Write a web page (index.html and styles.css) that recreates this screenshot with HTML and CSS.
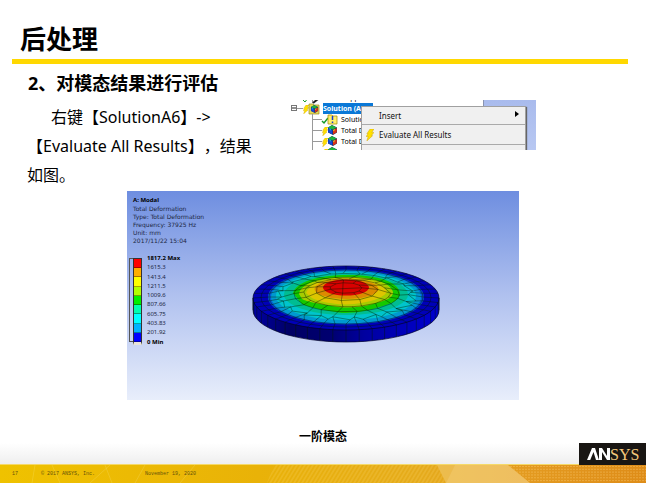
FILE: index.html
```html
<!DOCTYPE html>
<html lang="zh-CN">
<head>
<meta charset="utf-8">
<title>后处理</title>
<link rel="stylesheet" href="styles.css">
</head>
<body>
<svg class="defs" aria-hidden="true">
  <symbol id="bolt" viewBox="0 0 6 9"><path d="M3 0H6L4.4 2.6H6L4 5H5L.6 9 1.6 5.6H0L1.6 3.6H.6Z" fill="#ffe000" stroke="#c79b00" stroke-width=".3"/></symbol>
  <symbol id="cube" viewBox="0 0 11 10"><path d="M5 0 10 2.5V7.5L6 10 1 7.5V2.5Z" fill="#17306b"/><path d="M1 2.5 5 .3 9.7 2.5 5.5 4.5Z" fill="#1eb53a"/><path d="M1.2 3 5.3 5V9.3L1.2 7.3Z" fill="#1548d8"/><path d="M6 5 9.8 3V7.3L6 9.4Z" fill="#d93217"/><path d="M2 2.5 4 4 3.4 6Z" fill="#16c7c2"/><path d="M6 5 8 4 7 6.4Z" fill="#eadb27"/></symbol>
  <symbol id="branch" viewBox="0 0 29 11"><path d="M.5 0V11M1 5.500H10" stroke="#999" fill="none"/><use href="#bolt" x="10" y="2" width="6" height="9"/><use href="#cube" x="15" y="0" width="11" height="10"/></symbol>
</svg>
<main class="slide">
  <h1>后处理</h1>
  <section class="content">
    <h2>2、对模态结果进行评估</h2>
    <div class="intro">
      <p>右键【SolutionA6】-&gt;【Evaluate All Results】，结果如图。</p>
      <div class="outline">
        <ul class="tree">
          <li class="child"><svg width="29" height="11"><path d="M.5 0V11M1 5.500H10" stroke="#999"/><path d="M-9 8-7 10 -4 6" stroke="#159a28" fill="none"/><path d="M1 11 6 7" stroke="#222" stroke-width="2"/></svg><span class="near">Fixed Support</span></li>
          <li><svg width="33" height="11"><path d="M7 5.500H13" stroke="#999"/><rect x="1.500" y="2.500" width="5" height="5" fill="#fff" stroke="#777"/><path d="M2 5H6" stroke="#222"/><use href="#bolt" x="13" y="2" width="6" height="9"/><path d="M19 1H23L24 2H29V11H19Z" fill="#e8dc58" stroke="#998a1a" stroke-width=".7"/><use href="#cube" x="20" y="2" width="9" height="8"/></svg><b>Solution (A6)</b></li>
          <li class="child"><svg width="29" height="11"><path d="M.5 0V11M1 5.500H10" stroke="#999"/><path d="M10 7 12 9 16 4" stroke="#159a28" stroke-width="1.500" fill="none"/><path d="M16 1H20L21 2H25V10H16Z" fill="#fff06a" stroke="#a79318" stroke-width=".8"/><path d="M20.500 2V6M20.500 7.500V9" stroke="#1639d0" stroke-width="1.500"/></svg><span>Solutio</span></li>
          <li class="child"><svg width="29" height="11"><use href="#branch"/></svg><span>Total D</span></li>
          <li class="child"><svg width="29" height="11"><use href="#branch"/></svg><span>Total D</span></li>
          <li class="child"><svg width="29" height="11"><use href="#branch"/></svg><span>Total D</span></li>
        </ul>
        <div class="viewport"></div>
        <div class="menu">
          <button type="button">Insert<svg class="arrow" width="4" height="6"><path d="M0 0 4 3 0 6Z"/></svg></button>
          <button type="button"><svg class="flash" width="8" height="12"><use href="#bolt" width="8" height="12"/></svg>Evaluate All Results</button>
        </div>
      </div>
    </div>
  </section>
  <figure>
    <div class="result">
      <div class="info"><b>A: Modal</b><span>Total Deformation</span><span>Type: Total Deformation</span><span>Frequency: 37925 Hz</span><span>Unit: mm</span><span>2017/11/22 15:04</span></div>
      <div class="legend">
        <div class="bracket"></div>
        <div class="scale"><i class="c1"></i><i class="c2"></i><i class="c3"></i><i class="c4"></i><i class="c5"></i><i class="c6"></i><i class="c7"></i><i class="c8"></i><i class="c9"></i></div>
        <div class="values"><b>1817.2 Max</b><span>1615.3</span><span>1413.4</span><span>1211.5</span><span>1009.6</span><span>807.66</span><span>605.75</span><span>403.83</span><span>201.92</span><b>0 Min</b></div>
      </div>
      <svg class="disc" viewBox="0 0 190 80" role="img" aria-label="Total deformation, mode 1">
        <defs><linearGradient id="side"><stop offset="0" stop-color="#0000a4"/><stop offset=".2" stop-color="#000064"/><stop offset=".42" stop-color="#000070"/><stop offset=".6" stop-color="#0000a0"/><stop offset="1" stop-color="#0000d0"/></linearGradient></defs>
        <path d="M2 34V46A93 32 0 0 0 188 46V34Z" fill="url(#side)" stroke="#000028" stroke-width=".7"/>
        <ellipse cx="95" cy="34" rx="93" ry="32" fill="#0000b8" stroke="#000028" stroke-width=".7"/>
        <ellipse cx="95" cy="33" rx="78" ry="27.500" fill="#0058d8"/>
        <ellipse cx="95" cy="33" rx="75" ry="26.500" fill="#0098cf"/>
        <ellipse cx="95" cy="32" rx="70" ry="24" fill="#00c4cc"/>
        <ellipse cx="95" cy="30.500" rx="62" ry="20.500" fill="#00bd92"/>
        <path d="M42 29C45 18 67 11 97 11 128 11 146 18 149 28 150 36 140 40 128 43 114 48 101 49 91 49 74 46 60 44 51 40Z" fill="#14c800"/>
        <path d="M48 30C50 19 70 13 97 13 124 13 139 19 142 28 143 34 133 37 122 40 108 44 97 44 87 43 70 40 55 38 51 35Z" fill="#a6cb00"/>
        <path d="M55 29C59 19 73 14 95 14 119 14 132 19 136 28 131 35 118 38 103 40 86 42 66 37 61 34Z" fill="#ddc500"/>
        <ellipse cx="95.500" cy="25" rx="32" ry="10" fill="#dc8a00"/>
        <ellipse cx="95" cy="23.500" rx="23" ry="8" fill="#d90000"/>
        <path id="mesh" fill="none" stroke="#001800" stroke-opacity=".7" stroke-width=".6"/>
      </svg>
    </div>
    <figcaption>一阶模态</figcaption>
  </figure>
</main>
<footer>
  <div class="brand">
    <svg width="67" height="22" viewBox="0 0 67 22" role="img" aria-label="ANSYS"><path d="M8 17 13 5H16L20 17H17L14.500 9 11.200 17ZM20 17V5H23L28 13V5H31V17H28L23 9V17Z" fill="#fff"/><text x="31" y="17" class="sys">SYS</text></svg>
  </div>
  <div class="strip"><span>17</span><span>© 2017 ANSYS, Inc.</span><span>November 19, 2020</span>
    <svg class="rays" viewBox="0 0 646 19" preserveAspectRatio="none" aria-hidden="true">
      <defs>
        <pattern id="arcs" width="4" height="19" patternUnits="userSpaceOnUse" patternTransform="skewX(-30)"><path d="M1 0V19" stroke="#ffe07a" stroke-opacity=".35"/></pattern>
        <pattern id="dots" width="3" height="3" patternUnits="userSpaceOnUse"><path d="M0 1.500H2" stroke="#ffd27a" stroke-opacity=".4"/></pattern>
      </defs>
      <path d="M90 19 110 0M105 0 112 19M135 19 145 0M180 19 195 0M35 0 32 19M52 0 60 19" stroke="#fff0a0" stroke-opacity=".2" fill="none"/>
      <path d="M274 0H437L446 19H267Z" fill="url(#arcs)"/>
      <path d="M437 0H508L530 19H446Z" fill="#f8dc96" fill-opacity=".4"/>
      <path d="M455 0H508L530 19H446Z" fill="#f8dc96" fill-opacity=".25"/>
      <path d="M508 0H646V19H530Z" fill="url(#dots)"/>
    </svg>
  </div>
</footer>
<script src="mesh.js"></script>
</body>
</html>
```
FILE: styles.css
```css
* { box-sizing: border-box; }
body {
  margin: 0;
  min-height: 100vh;
  display: flex;
  flex-direction: column;
  background: #fff;
  color: #000;
  font-family: "Noto Sans", "Noto Sans CJK SC", sans-serif;
  text-spacing-trim: space-all;
}
.defs { position: absolute; width: 0; height: 0; }
svg { display: block; flex: none; }
.slide { flex: 1; }
h1 {
  margin: 0 18px 0 12px;
  padding: 18px 0 2px 8px;
  border-bottom: 5px solid #ffd800;
  font: bold 26px/39px "Noto Sans CJK SC", sans-serif;
}
.content { padding: 0 110px 0 27px; }
h2 {
  margin: 0;
  padding: 3px 0 1px 1px;
  font: bold 18px/32px "Noto Sans", "Noto Sans CJK SC", sans-serif;
}
.intro { display: flex; justify-content: space-between; }
.intro p {
  margin: 0;
  padding: 3px 0 1px;
  width: 240px;
  font-size: 16px;
  line-height: 29px;
  text-indent: 24px;
}
.outline {
  position: relative;
  display: flex;
  width: 246px;
  height: 50px;
  overflow: hidden;
  background: #fff;
}
.tree {
  flex: 1;
  margin: -8px 0 0;
  padding: 0;
  list-style: none;
  font-size: 7px;
  line-height: 11px;
  white-space: nowrap;
}
.tree li { display: flex; height: 11px; }
.tree .child { padding-left: 22px; }
.tree svg { overflow: visible; }
.tree b { background: #0a78d7; color: #fff; padding-right: 6px; }
.tree .near { margin-left: -18px; }
.viewport {
  width: 53px;
  border-left: 1px solid #8a94b0;
  background: linear-gradient(#a9bbed, #b8c8f2);
}
.menu {
  position: absolute;
  left: 71px;
  top: 6px;
  width: 165px;
  height: 60px;
  border: 1px solid #a0a0a0;
  background: #f0f0f0;
  box-shadow: 1px 1px 1px #666;
}
.menu button {
  position: relative;
  display: flex;
  align-items: center;
  width: 100%;
  height: 18px;
  padding: 0 6px 0 17px;
  border: 0;
  border-bottom: 1px solid #aaa;
  background: none;
  color: #111;
  font: 8px/16px "Noto Sans", sans-serif;
}
.menu button + button { height: 20px; }
.arrow { margin: 0 0 4px auto; }
.flash { position: absolute; left: 4px; top: 4px; }
figure { margin: 0; }
.result {
  position: relative;
  width: 392px;
  max-width: 100%;
  margin: 0 auto;
  padding: 5px 6px 53px;
  background: linear-gradient(#6e8ee0, #b0c1ef 50%, #e8eefb);
  color: #1c2744;
  font-size: 6px;
}
.info {
  display: flex;
  flex-direction: column;
  font-family: "DejaVu Sans", sans-serif;
  line-height: 8px;
}
.info b, .values b { color: #000; }
.info b { font-family: "Noto Sans", sans-serif; line-height: 9px; }
.legend { display: flex; height: 93px; margin-top: 9px; }
.bracket {
  width: 5px;
  margin: 4px -1px 5px -4px;
  border: 1px solid #555;
  border-right: 0;
}
.scale {
  display: flex;
  flex-direction: column;
  width: 9px;
  margin: 4px 5px 2px 0;
  border: 1px solid #333;
  border-bottom: 3px solid #e8e4d8;
}
.scale i { flex: 1; border-bottom: 1px solid rgba(0, 0, 0, .35); }
.c1 { background: #f00; }
.c2 { background: #ffae00; }
.c3 { background: #ff0; }
.c4 { background: #b2ff00; }
.c5 { background: #00f000; }
.c6 { background: #00ffb2; }
.c7 { background: #0ff; }
.c8 { background: #00b2ff; }
.c9 { background: #00f; }
.values { display: flex; flex-direction: column; }
.values > * { flex: 1; line-height: 9px; }
.disc { position: absolute; left: 124px; top: 73px; width: 190px; height: 80px; }
figcaption {
  padding-top: 29px;
  font: bold 12px/14px "Noto Sans CJK SC", sans-serif;
  text-align: center;
}
.brand {
  display: flex;
  justify-content: flex-end;
  margin-bottom: -1px;
  background: linear-gradient(#fff, #eee);
}
.brand svg { position: relative; z-index: 1; background: #191613; }
.sys { font: 16px "Liberation Serif", serif; fill: #f3c77c; }
.strip {
  position: relative;
  display: flex;
  height: 19px;
  padding: 0 12px;
  border-top: 1px solid #f5d968;
  background: linear-gradient(90deg, #efc200, #e9b208 40%, #e5ab1c 65%, #e39a20 82%, #de8c18);
  color: #65530a;
  font: 5px/18px "Liberation Mono", monospace;
}
.strip span:nth-child(2) { margin: 0 50px 0 23px; }
.rays { position: absolute; left: 0; top: 0; width: 100%; height: 100%; }
```
FILE: mesh.js
```js
// Element edges of the disc: rim cells, domed interior grid and side wall.
const rings = [
  [95, 34, 93, 32], [95, 33.500, 85, 29.500], [95, 33, 77, 27],
  [95, 32, 67, 22.500], [95, 30.500, 56, 18.500], [95, 28.500, 44, 14.500],
  [95, 26, 30, 10], [95, 24, 15, 5]
];
const n = 44;
const at = (r, i) => {
  i = i % n;
  const [cx, cy, rx, ry] = rings[r];
  const bend = r > 2 ? Math.sin(i * 2.3 + r * 1.7) * 0.07 : 0;
  const a = (i / n) * Math.PI * 2 + bend;
  const k = 1 + (r > 2 ? Math.cos(i * 3.1 + r) * 0.07 : 0);
  return `${(cx + rx * k * Math.cos(a)).toFixed(1)} ${(cy + ry * k * Math.sin(a)).toFixed(1)}`;
};
let d = "";
for (let r = 1; r < rings.length; r++) {
  const step = r > 5 ? 4 : r > 3 ? 2 : 1;
  for (let i = 0; i < n; i += step) {
    d += `M${at(r - 1, i)}L${at(r, i)}L${at(r, i + step)}`;
  }
}
d += `M${at(7, 0)}L${at(7, 20)}M${at(7, 12)}L${at(7, 32)}`;
for (let i = 0; i <= n / 2; i++) {
  d += `M${at(0, i)}v12`;
}
document.getElementById("mesh").setAttribute("d", d);
```
